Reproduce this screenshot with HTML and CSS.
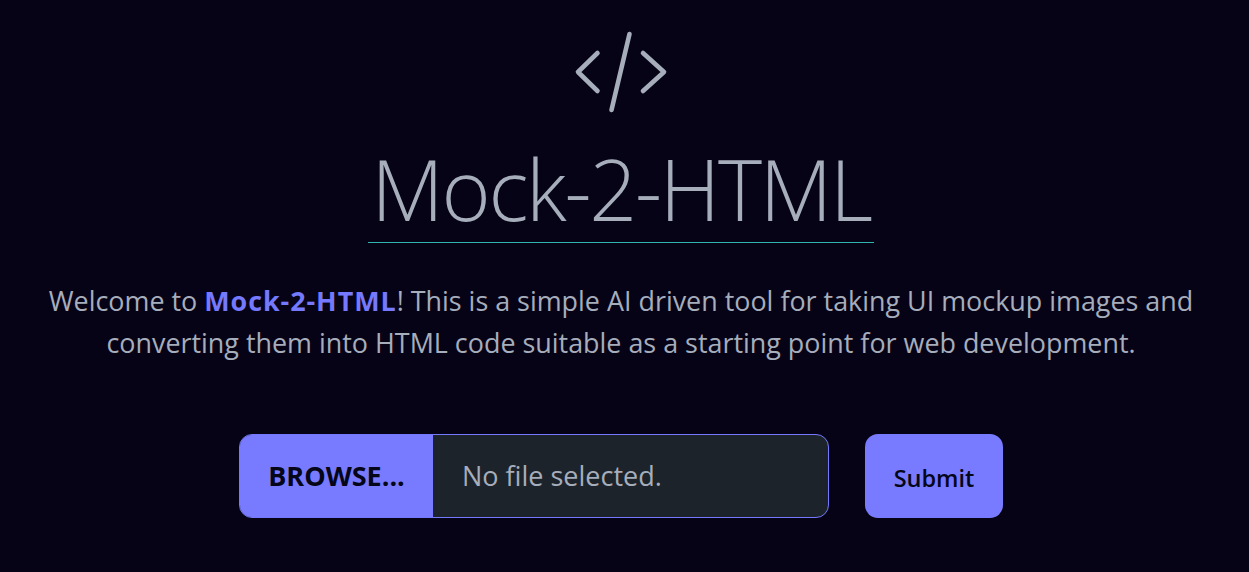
FILE: index.html
```html
<!DOCTYPE html>
<html lang="en">
<head>
    <meta charset="UTF-8">
    <meta name="viewport" content="width=device-width, initial-scale=1.0">
    <title>Mock-2-HTML</title>
    <link rel="stylesheet" href="styles.css">
</head>
<body>
    <main class="page">
        <svg class="logo" width="96" height="96" viewBox="0 0 96 96" fill="none" stroke="currentColor" stroke-width="4.6" stroke-linecap="round" stroke-linejoin="round">
            <path d="M24.5 29 L5 48 L24.5 67"/>
            <path d="M56.5 10 L38.5 86"/>
            <path d="M70 29 L91 48 L70 67"/>
        </svg>
        <h1 class="title">Mock-2-HTML</h1>
        <p class="intro">Welcome to <strong>Mock-2-HTML</strong>! This is a simple AI driven tool for taking UI mockup images and converting them into HTML code suitable as a starting point for web development.</p>
        <form class="upload">
            <div class="file-input">
                <span class="browse">BROWSE...</span>
                <span class="file-name">No file selected.</span>
            </div>
            <button class="submit" type="button">Submit</button>
        </form>
    </main>
</body>
</html>
```

FILE: styles.css
```css
body {
    margin: 0;
    background: #070317;
    color: #a6adbb;
    font-family: "Open Sans", "Noto Sans", sans-serif;
    overflow: hidden;
}
.page {
    width: 1242px;
    display: flex;
    flex-direction: column;
    align-items: center;
    padding-top: 24px;
}
.logo {
    display: block;
}
.title {
    margin: 16px 0 0;
    padding: 0 3px;
    border-bottom: 1px solid #2fb5ad;
    font-size: 84px;
    font-weight: 300;
    line-height: 106px;
    letter-spacing: -2.25px;
}
.intro {
    width: 1180px;
    margin: 37px 0 0;
    font-size: 26.9px;
    line-height: 42px;
    text-align: center;
}
.intro strong {
    color: #7479ff;
    font-weight: 700;
    letter-spacing: 0.95px;
}
.upload {
    display: flex;
    gap: 36px;
    margin-top: 70px;
}
.file-input {
    display: flex;
    width: 590px;
    height: 84px;
    box-sizing: border-box;
    background: #1d232a;
    border: 1px solid #7479ff;
    border-radius: 13px;
    overflow: hidden;
}
.browse {
    width: 193px;
    padding-bottom: 2px;
    display: flex;
    align-items: center;
    justify-content: center;
    background: #787bff;
    color: #050617;
    font-size: 27px;
    font-weight: 700;
}
.file-name {
    display: flex;
    align-items: center;
    padding: 0 0 2px 29px;
    font-size: 27px;
}
.submit {
    width: 138px;
    height: 84px;
    padding: 4px 0 0;
    background: #787bff;
    color: #050617;
    border: none;
    border-radius: 13px;
    font-family: inherit;
    font-size: 23.5px;
    font-weight: 600;
}
```
